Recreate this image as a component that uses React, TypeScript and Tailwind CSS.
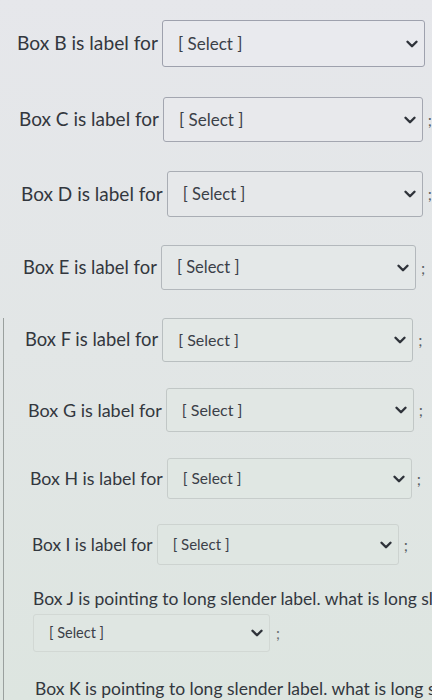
import { ChevronDown } from 'lucide-react'
import clsx from 'clsx'

// ─── Rows ─────────────────────────────────────────────────────────────────────
// each row is written out in full so Tailwind picks up every class

type Row = {
  letter: string
  row: string     // margin-top + height + left padding
  label: string   // font size of the label
  box: string     // width + border colour of the select
  select: string  // font size of the placeholder
  semi?: boolean
}

const TOP_ROWS: Row[] = [
  { letter: 'B', row: 'mt-[20px] h-[47px] pl-[17px]', label: 'text-[19.2px]', box: 'w-[263px] border-[#9ea1ad] bg-[#e9eaee]', select: 'text-[17px]' },
  { letter: 'C', row: 'mt-[30px] h-[45px] pl-[19px]', label: 'text-[19px]', box: 'w-[260px] border-[#a3a6b0] bg-[#e8e9ec]', select: 'text-[17px]', semi: true },
  { letter: 'D', row: 'mt-[29px] h-[46px] pl-[21px]', label: 'text-[19px]', box: 'w-[257px] border-[#a9adb4] bg-[#e6e8ea]', select: 'text-[16.5px]', semi: true },
  { letter: 'E', row: 'mt-[28px] h-[45px] pl-[23px]', label: 'text-[18.4px]', box: 'w-[255px] border-[#b3b8bc] bg-[#e4e8e8]', select: 'text-[16.5px]', semi: true },
]

// these sit inside the bordered column, so their padding is 4px less
const LOWER_ROWS: Row[] = [
  { letter: 'F', row: 'mt-[28px] h-[44px] pl-[21px]', label: 'text-[18.4px]', box: 'w-[251px] border-[#b9bfc0] bg-[#e3e8e6]', select: 'text-[16px]', semi: true },
  { letter: 'G', row: 'mt-[26px] h-[44px] pl-[24px]', label: 'text-[18px]', box: 'w-[248px] border-[#c1c7c6] bg-[#e1e7e4]', select: 'text-[16px]', semi: true },
  { letter: 'H', row: 'mt-[26px] h-[41px] pl-[26px]', label: 'text-[17.8px]', box: 'w-[245px] border-[#c7cdcb] bg-[#e0e7e3]', select: 'text-[15.5px]', semi: true },
  { letter: 'I', row: 'mt-[25px] h-[41px] pl-[28px]', label: 'text-[17.3px]', box: 'w-[242px] border-[#cdd3d0] bg-[#dfe6e2]', select: 'text-[15px]', semi: true },
]

const font = "font-['Lato','Liberation_Sans',sans-serif]"

function SelectBox({ className, textSize }: { className: string; textSize: string }) {
  return (
    <div className={clsx('flex h-full items-center justify-between rounded-[3px] border pl-[15px] pr-[3px]', className)}>
      <span className={clsx('text-[#3b4048]', textSize)}>[ Select ]</span>
      <ChevronDown size={18} strokeWidth={3.2} className="text-[#2f333a]" />
    </div>
  )
}

function LabelRow({ r }: { r: Row }) {
  return (
    <div className={clsx('flex items-center', r.row)}>
      <span className={clsx('whitespace-nowrap pr-[4px]', r.label)}>Box {r.letter} is label for</span>
      <SelectBox className={r.box} textSize={r.select} />
      {r.semi && <span className="pl-[5px] text-[16px] text-[#5a5f64]">;</span>}
    </div>
  )
}

export default function App() {
  return (
    <div className={clsx('h-[700px] w-[432px] overflow-hidden bg-linear-to-b from-[#e6e7eb] via-[#e2e6e6] to-[#dde5e0] text-[#33373e]', font)}>
      {TOP_ROWS.map(r => <LabelRow key={r.letter} r={r} />)}

      {/* lower part: the question column's left border shows here */}
      <div className="ml-[3px] border-l border-[#9aa09e]">
        {LOWER_ROWS.map(r => <LabelRow key={r.letter} r={r} />)}

        <div className="pl-[29px] pt-[23px]">
          <p className="whitespace-nowrap text-[17.5px] leading-[22px]">
            Box J is pointing to long slender label. what is long slender label for
          </p>
          <div className="mt-[4px] flex h-[38px] items-center">
            <SelectBox className="w-[237px] border-[#d2d8d4] bg-[#dfe6e2]" textSize="text-[14.5px]" />
            <span className="pl-[6px] text-[15px] text-[#6a6f72]">;</span>
          </div>
          <p className="mt-[26px] whitespace-nowrap pl-[2px] text-[17.5px] leading-[22px]">
            Box K is pointing to long slender label. what is long slender label for
          </p>
        </div>
      </div>
    </div>
  )
}
